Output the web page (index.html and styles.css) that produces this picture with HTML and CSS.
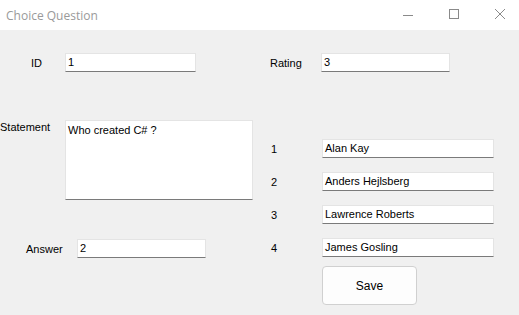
FILE: index.html
```html
<!DOCTYPE html>
<html lang="en">
<head>
    <meta charset="UTF-8">
    <meta name="viewport" content="width=device-width, initial-scale=1.0">
    <title>Choice Question</title>
    <link rel="stylesheet" href="styles.css">
</head>
<body>
    <header class="titlebar">
        <span class="title">Choice Question</span>
        <div class="controls">
            <svg class="ctl" width="46" height="30" viewBox="0 0 46 30">
                <line x1="23" y1="15.5" x2="33" y2="15.5" stroke="#8a8a8a" stroke-width="1"/>
            </svg>
            <svg class="ctl" width="46" height="30" viewBox="0 0 46 30">
                <rect x="23.5" y="9.5" width="9" height="9" fill="none" stroke="#8a8a8a" stroke-width="1"/>
            </svg>
            <svg class="ctl" width="46" height="30" viewBox="0 0 46 30">
                <path d="M23 9 L33 19 M33 9 L23 19" stroke="#8a8a8a" stroke-width="1"/>
            </svg>
        </div>
    </header>

    <div class="form">
        <!-- question side -->
        <div class="col col-left">
            <div class="row row-id">
                <span class="lbl">ID</span>
                <div class="field w-id">1</div>
            </div>
            <div class="row row-stmt">
                <span class="lbl">Statement</span>
                <div class="field area">Who created C# ?</div>
            </div>
            <div class="row row-answer">
                <span class="lbl">Answer</span>
                <div class="field w-short">2</div>
            </div>
        </div>

        <!-- choices side -->
        <div class="col col-right">
            <div class="row row-rating">
                <span class="lbl">Rating</span>
                <div class="field w-short">3</div>
            </div>
            <div class="options">
                <div class="row opt"><span class="lbl">1</span><div class="field w-opt">Alan Kay</div></div>
                <div class="row opt"><span class="lbl">2</span><div class="field w-opt">Anders Hejlsberg</div></div>
                <div class="row opt"><span class="lbl">3</span><div class="field w-opt">Lawrence Roberts</div></div>
                <div class="row opt"><span class="lbl">4</span><div class="field w-opt">James Gosling</div></div>
            </div>
            <button class="save">Save</button>
        </div>
    </div>
</body>
</html>
```

FILE: styles.css
```css
body {
    margin: 0;
    padding: 0;
    background-color: #f0f0f0;
    font-family: "Liberation Sans", Arial, sans-serif;
    font-size: 11px;
    color: #000;
}
.titlebar {
    height: 30px;
    background: #fff;
    display: flex;
    align-items: center;
    justify-content: space-between;
}
.title {
    padding-left: 6px;
    font-family: "Open Sans", "Noto Sans", sans-serif;
    font-size: 12px;
    color: #9a9a9a;
}
.controls {
    display: flex;
    padding-right: 1px;
}
.ctl {
    display: block;
}
.form {
    display: grid;
    grid-template-columns: 270px 1fr;
}
.row {
    display: flex;
    align-items: center;
}
.lbl {
    box-sizing: border-box;
    flex: none;
}
.field {
    box-sizing: border-box;
    height: 19px;
    background: #fff;
    border: 1px solid #e4e4e4;
    border-bottom: 1px solid #7a7a7a;
    padding: 0 2px;
    line-height: 17px;
    white-space: nowrap;
}
.row-id {
    margin-top: 23px;
}
.row-id .lbl {
    width: 65px;
    padding-left: 31px;
}
.w-id {
    width: 131px;
}
.row-stmt {
    margin-top: 48px;
    align-items: flex-start;
}
.row-stmt .lbl {
    width: 65px;
    padding-top: 1px;
}
.area {
    width: 188px;
    height: 80px;
    padding-top: 1px;
}
.row-answer {
    margin-top: 39px;
}
.row-answer .lbl {
    width: 77px;
    padding-left: 26px;
}
.w-short {
    width: 129px;
}
.row-rating {
    margin-top: 23px;
}
.row-rating .lbl {
    width: 51px;
}
.options {
    margin-top: 67px;
    display: flex;
    flex-direction: column;
    gap: 14px;
}
.opt .lbl {
    width: 52px;
    padding-left: 1px;
}
.w-opt {
    width: 172px;
}
.save {
    margin: 9px 0 0 52px;
    width: 95px;
    height: 39px;
    background: #fdfdfd;
    border: 1px solid #d0d0d0;
    border-radius: 4px;
    font-family: "Liberation Sans", Arial, sans-serif;
    font-size: 12px;
    color: #000;
    padding: 0;
}
```
